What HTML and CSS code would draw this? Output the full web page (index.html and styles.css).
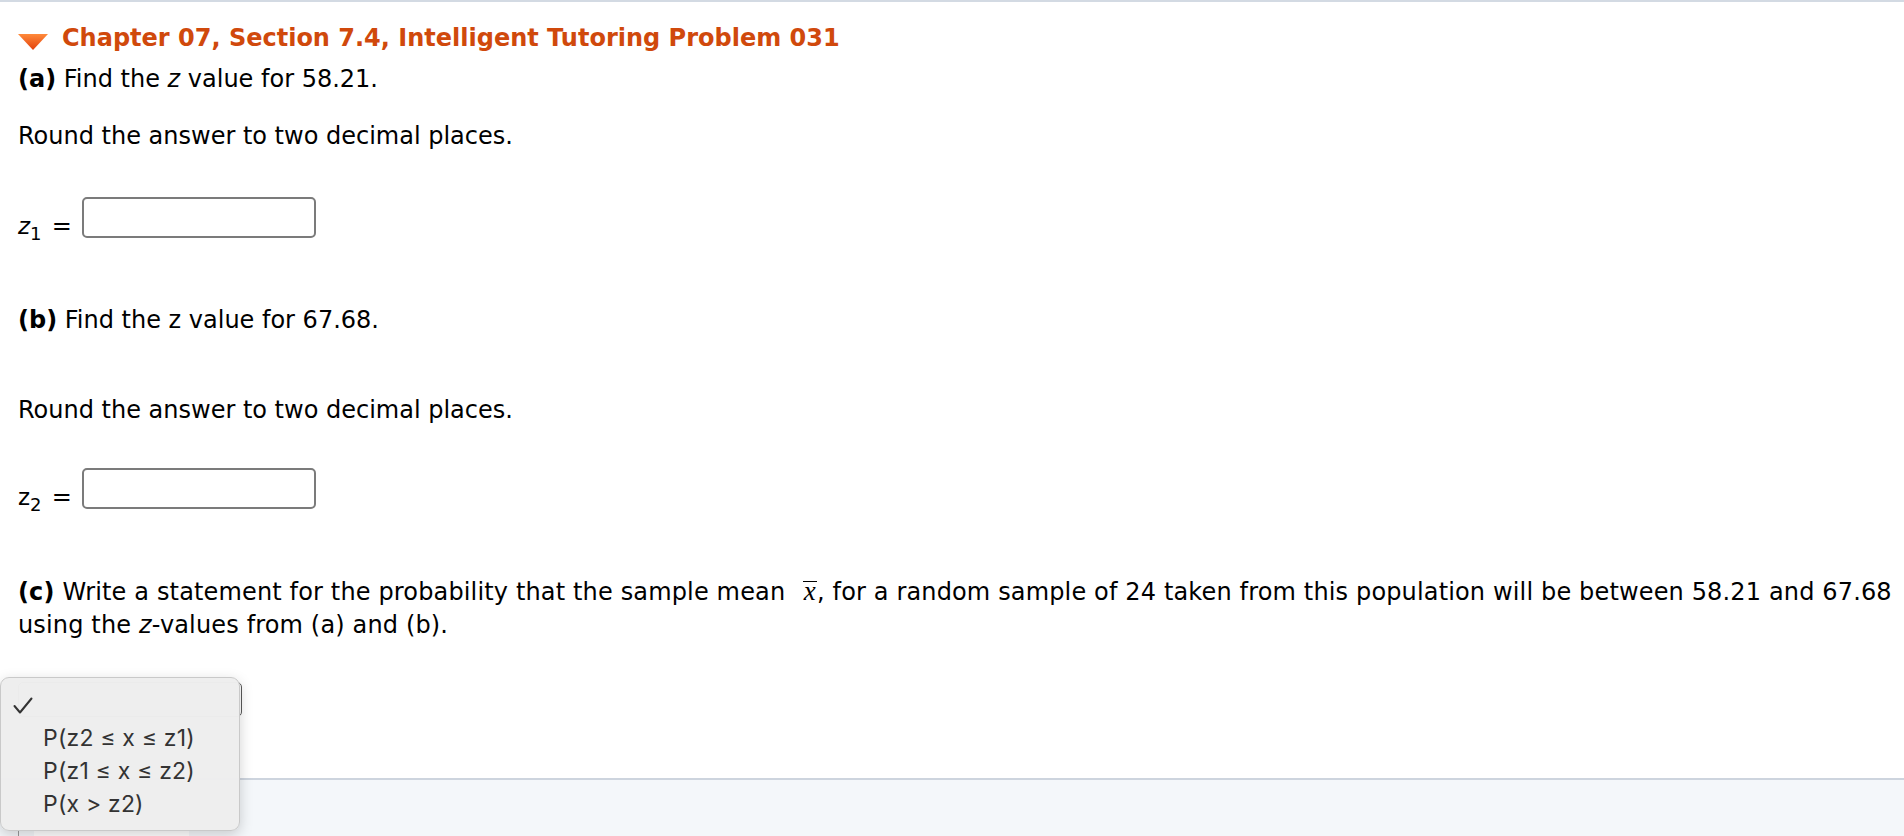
FILE: index.html
```html
<!DOCTYPE html>
<html lang="en">
<head>
<meta charset="utf-8">
<title>Chapter 07, Section 7.4, Intelligent Tutoring Problem 031</title>
<link rel="stylesheet" href="styles.css">
</head>
<body>
<div class="topline"></div>
<main class="question">
  <h1 class="title">
    <svg class="caret" width="30" height="16" viewBox="0 0 30 16" aria-hidden="true">
      <defs>
        <linearGradient id="cg" x1="0" y1="0" x2="0" y2="1">
          <stop offset="0" stop-color="#ff8a3a"/>
          <stop offset="1" stop-color="#e2400c"/>
        </linearGradient>
      </defs>
      <polygon points="0,0 30,0 15,16" fill="url(#cg)"/>
    </svg>
    <span>Chapter 07, Section 7.4, Intelligent Tutoring Problem 031</span>
  </h1>

  <p class="part part-a"><b>(a)</b> Find the <i>z</i> value for 58.21.</p>
  <p class="round">Round the answer to two decimal places.</p>
  <div class="answer-row">
    <span class="label"><i class="zvar">z</i><span class="sub">1</span> <span class="eq">=</span></span>
    <span class="input"></span>
  </div>

  <p class="part part-b"><b>(b)</b> Find the z value for 67.68.</p>
  <p class="round round-b">Round the answer to two decimal places.</p>
  <div class="answer-row">
    <span class="label"><span class="zvar">z</span><span class="sub">2</span> <span class="eq">=</span></span>
    <span class="input"></span>
  </div>

  <p class="part part-c"><b>(c)</b> Write a statement for the probability that the sample mean&nbsp; <span class="xbar">x</span>, for a random sample of 24 taken from this population will be between 58.21 and 67.68<br>using the <i>z</i>-values from (a) and (b).</p>

  <div class="select"></div>
</main>

<footer class="footer">
  <div class="footer-box"></div>
</footer>

<div class="popup" role="listbox">
  <div class="opt opt-checked">
    <svg class="check" width="20" height="18" viewBox="0 0 20 18" aria-hidden="true">
      <polyline points="1.5,9 7,15.5 18.5,1.5" fill="none" stroke="#333" stroke-width="2" stroke-linecap="round" stroke-linejoin="round"/>
    </svg>
  </div>
  <div class="opt">P(z2 ≤ x ≤ z1)</div>
  <div class="opt">P(z1 ≤ x ≤ z2)</div>
  <div class="opt">P(x &gt; z2)</div>
</div>
</body>
</html>
```

FILE: styles.css
```css
html, body {
  margin: 0;
  padding: 0;
  background: #ffffff;
}

body {
  font-family: "DejaVu Sans", Verdana, sans-serif;
  font-size: 24px;
  line-height: 33px;
  color: #000;
  height: 836px;
  overflow: hidden;
  position: relative;
}

.topline {
  height: 2px;
  background: #d3dae3;
}

.question {
  padding: 0 0 0 18px;
}

.title {
  display: flex;
  align-items: center;
  margin: 20px 0 0 0;
  font-size: 24px;
  line-height: 33px;
  font-weight: bold;
  color: #d0490c;
}

.caret {
  flex: none;
  margin: 6px 14px 0 0;
}

p {
  margin: 0;
}

.part-a {
  margin-top: 8px;
}

.part-a i, .part-c i {
  font-style: italic;
}

.round {
  margin-top: 24px;
}

.answer-row {
  display: flex;
  align-items: flex-end;
  margin-top: 44px;
  height: 41px;
}

.label {
  font-size: 23px;
  line-height: 20px;
  margin: 0 10px 2px 0;
  white-space: nowrap;
}

.eq {
  margin-left: 3px;
  font-size: 24px;
}

.zvar {
  font-style: normal;
}

i.zvar {
  font-style: italic;
}

.sub {
  font-size: 18px;
  line-height: 0;
  vertical-align: -6px;
}

.input {
  display: block;
  width: 230px;
  height: 37px;
  border: 2px solid #7b7b7b;
  border-radius: 5px;
  background: #fff;
}

.part-b {
  margin-top: 66px;
}

.round-b {
  margin-top: 57px;
}

.round-b + .answer-row {
  margin-top: 41px;
}

.part-c {
  margin-top: 67px;
  white-space: nowrap;
  letter-spacing: 0.15px;
}

.xbar {
  display: inline-block;
  font-family: "Liberation Serif", "Times New Roman", serif;
  font-style: italic;
  font-size: 27px;
  line-height: 18px;
  border-top: 1.5px solid #000;
  padding: 0 1px;
  margin-left: 2px;
}

.select {
  margin-top: 40px;
  width: 222px;
  height: 33px;
  border: 1.5px solid #5a5a5a;
  border-radius: 5px;
  background: #fff;
}

.footer {
  position: absolute;
  left: 0;
  right: 0;
  top: 778px;
  bottom: 0;
  border-top: 2px solid #cdd4de;
  background: #f4f7fa;
  padding: 50px 0 0 18px;
  box-sizing: border-box;
}

.footer-box {
  height: 10px;
  width: 170px;
  border-left: 1px solid #9a9a9a;
  background: linear-gradient(to right, #f4f7fa 0 15px, #ffffff 15px 100%);
}

.popup {
  position: absolute;
  left: 0;
  top: 677px;
  width: 240px;
  height: 154px;
  box-sizing: border-box;
  padding: 11px 0 0 0;
  background: rgba(238, 238, 238, 0.98);
  border: 1px solid #c9c9c9;
  border-radius: 9px;
  box-shadow: 0 4px 14px rgba(0, 0, 0, 0.18);
  font-family: Inter, "Noto Sans", "Liberation Sans", sans-serif;
  font-size: 23px;
  line-height: 33px;
  color: #333;
  letter-spacing: 0.2px;
}

.opt {
  height: 33px;
  padding-left: 42px;
  white-space: nowrap;
}

.opt-checked {
  display: flex;
  align-items: center;
  padding-left: 12px;
}
```
